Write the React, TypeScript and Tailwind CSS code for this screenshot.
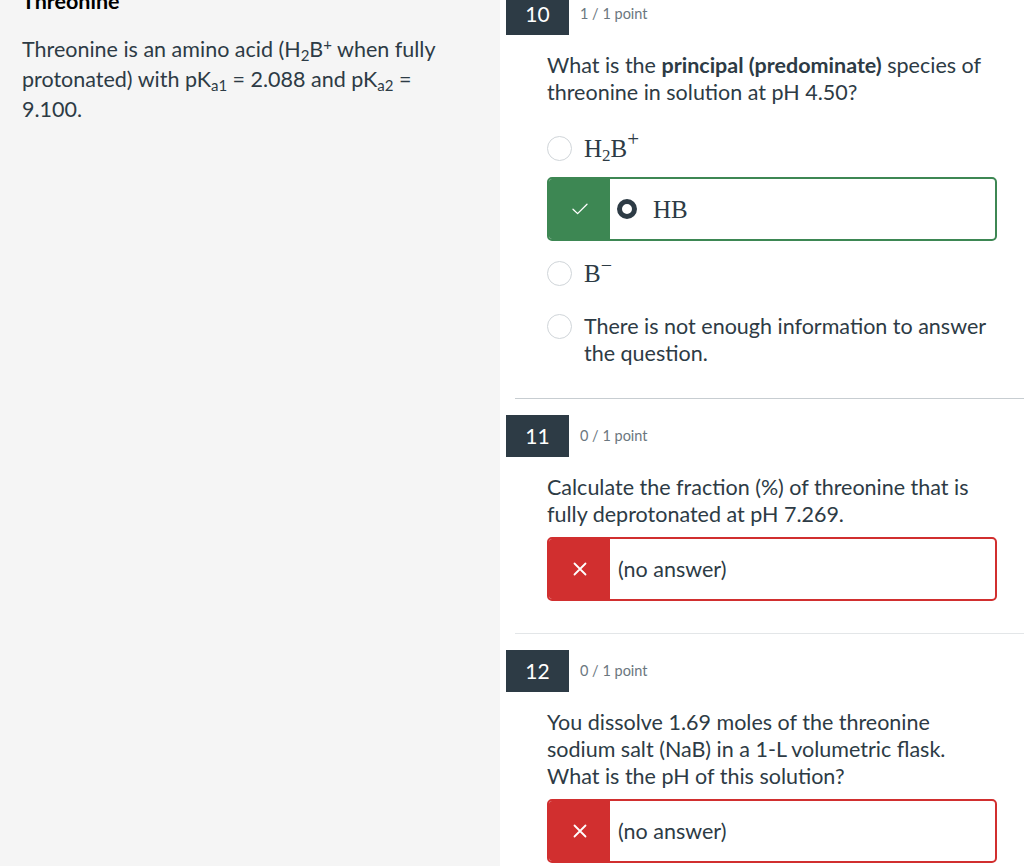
import React from 'react';

const font = { fontFamily: 'Lato, "Open Sans", sans-serif' };

const Badge = ({ n, points }: { n: string; points: string }) => (
  <div className="flex items-center">
    <div className="ml-[6px] flex h-[42px] w-[63px] items-center justify-center bg-[#2d3b45] text-[21px] text-white">
      {n}
    </div>
    <div className="ml-[11px] text-[14.5px] text-[#6b7780]">{points}</div>
  </div>
);

const Radio = () => (
  <div className="h-[25px] w-[25px] shrink-0 rounded-full border border-[#d0d5d9] bg-white" />
);

const Check = () => (
  <svg width="16" height="12" viewBox="0 0 16 12" fill="none">
    <path d="M1 6.2 L5.6 10.6 L15 1.2" stroke="white" strokeWidth="1.3" strokeLinecap="round" strokeLinejoin="round" />
  </svg>
);

const Cross = () => (
  <svg width="14" height="14" viewBox="0 0 14 14" fill="none">
    <path d="M1.5 1.5 L12.5 12.5 M12.5 1.5 L1.5 12.5" stroke="white" strokeWidth="1.8" strokeLinecap="round" />
  </svg>
);

const WrongBox = () => (
  <div className="mr-[27px] flex h-[64px] overflow-hidden rounded-[5px] border-2 border-[#d12f2f]">
    <div className="flex w-[61px] items-center justify-center bg-[#d12f2f]">
      <Cross />
    </div>
    <div className="flex flex-1 items-center pl-[8px] text-[21.5px] text-[#2d3b45]">(no answer)</div>
  </div>
);

const math = { fontFamily: '"Liberation Serif", "Times New Roman", serif' };

export default function App() {
  return (
    <div className="flex h-[866px] overflow-hidden bg-white text-[#2d3b45]" style={font}>
      {/* Left: stimulus */}
      <div className="w-[500px] shrink-0 bg-[#f5f5f5] pl-[22px] pr-[40px]">
        <div className="mt-[-14px] text-[21.5px] font-bold leading-[30px] text-black">Threonine</div>
        <p className="mt-[18px] text-[21.5px] leading-[30px]">
          Threonine is an amino acid (H<sub className="text-[15px]">2</sub>B<sup className="text-[15px]">+</sup> when fully
          protonated) with pK<sub className="text-[15px]">a1</sub> = 2.088 and pK<sub className="text-[15px]">a2</sub> =
          9.100.
        </p>
      </div>

      {/* Right: questions */}
      <div className="flex-1">
        {/* Question 10 */}
        <div className="mt-[-7px]">
          <Badge n="10" points="1 / 1 point" />
          <div className="ml-[47px]">
            <p className="mr-[30px] mt-[17px] text-[21.5px] leading-[27px]">
              What is the <span className="font-bold">principal (predominate)</span> species of threonine in solution at pH 4.50?
            </p>

            <div className="mt-[18px] flex h-[48px] items-center gap-[12px]">
              <Radio />
              <span className="text-[25px] leading-none" style={math}>
                H<sub className="text-[17px]">2</sub>B<sup className="text-[21px]">+</sup>
              </span>
            </div>

            <div className="mr-[27px] mt-[5px] flex h-[64px] overflow-hidden rounded-[5px] border-2 border-[#3d8753]">
              <div className="flex w-[61px] items-center justify-center bg-[#3d8753]">
                <Check />
              </div>
              <div className="flex flex-1 items-center gap-[16px] pl-[7px]">
                <div className="h-[20px] w-[20px] rounded-full border-[5px] border-[#2d3b45] bg-white" />
                <span className="text-[25px] leading-none" style={math}>HB</span>
              </div>
            </div>

            <div className="mt-[8px] flex h-[48px] items-center gap-[12px]">
              <Radio />
              <span className="text-[25px] leading-none" style={math}>
                B<sup className="text-[20px]">−</sup>
              </span>
            </div>

            <div className="mr-[27px] flex items-start gap-[12px] pt-[16px]">
              <div className="mt-[1px]">
                <Radio />
              </div>
              <span className="text-[21.5px] leading-[27px]">There is not enough information to answer the question.</span>
            </div>
          </div>
        </div>

        <div className="ml-[15px] mt-[31px] h-px bg-[#c7cdd1]" />

        {/* Question 11 */}
        <div className="mt-[16px]">
          <Badge n="11" points="0 / 1 point" />
          <div className="ml-[47px]">
            <p className="mr-[40px] mt-[17px] text-[21.5px] leading-[27px]">
              Calculate the fraction (%) of threonine that is fully deprotonated at pH 7.269.
            </p>
            <div className="mt-[9px]">
              <WrongBox />
            </div>
          </div>
        </div>

        <div className="ml-[15px] mt-[32px] h-px bg-[#e3e6e8]" />

        {/* Question 12 */}
        <div className="mt-[16px]">
          <Badge n="12" points="0 / 1 point" />
          <div className="ml-[47px]">
            <p className="mr-[60px] mt-[17px] text-[21.5px] leading-[27px]">
              You dissolve 1.69 moles of the threonine sodium salt (NaB) in a 1-L volumetric flask. What is the pH of this solution?
            </p>
            <div className="mt-[9px]">
              <WrongBox />
            </div>
          </div>
        </div>
      </div>
    </div>
  );
}
